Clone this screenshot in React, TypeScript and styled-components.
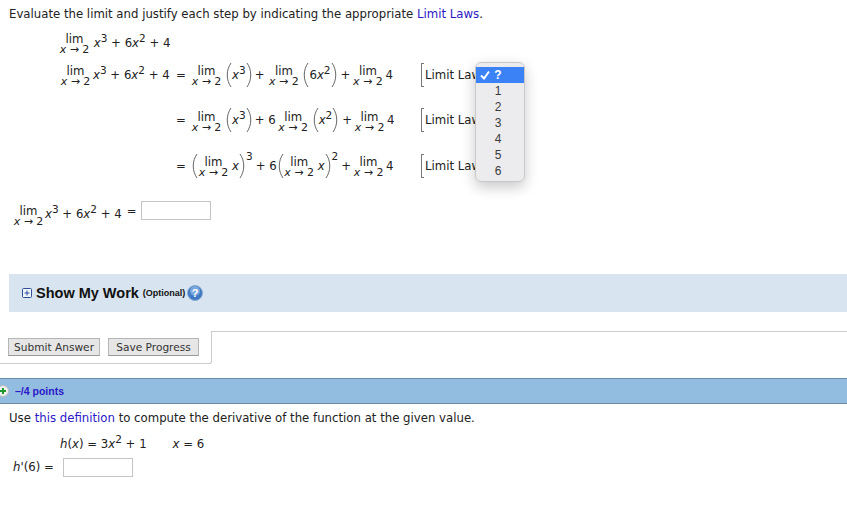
import React from "react";
import styled, { createGlobalStyle } from "styled-components";

const GlobalStyle = createGlobalStyle`
  html, body {
    margin: 0;
    background: #fff;
  }
  body {
    font-family: "DejaVu Sans", Verdana, sans-serif;
    font-size: 11.73px;
    color: #222;
    overflow: hidden;
  }
`;

const Page = styled.div`
  width: 847px;
  height: 511px;
  overflow: hidden;
`;

const Paragraph = styled.p`
  margin: 0;
  padding: 7px 0 0 9px;
  height: 14px;
  line-height: 14px;
`;

const TextLink = styled.a`
  color: #2a18c8;
`;

const MathLine = styled.div`
  white-space: pre;
  margin: 9px 0 0 59px;
  height: 18px;
  line-height: 18px;
`;

const LimBox = styled.span`
  display: inline-flex;
  flex-direction: column;
  align-items: center;
  flex: none;
  width: 31px;
  line-height: 10px;
  vertical-align: 4px;
  margin-top: 4px;
`;

const LimSub = styled.span`
  font-size: 11px;
  line-height: 10px;
  margin-top: 1px;
  white-space: pre;
`;

const Var = styled.i`
  font-style: italic;
`;

const Sup = styled.sup`
  font-size: 10.5px;
  line-height: 0;
  vertical-align: 5px;
`;

const ParenSup = styled.span`
  align-self: flex-start;
  font-size: 10.5px;
  line-height: 10px;
  margin-top: -2px;
`;

const Term = styled.span`
  white-space: pre;
`;

const Derivation = styled.div`
  position: relative;
  display: grid;
  grid-template-columns: 116px 15px 230px 1fr;
  grid-auto-rows: 45.5px;
  align-items: center;
  margin: 4px 0 0 60px;
  height: 137px;
`;

const Cell = styled.div`
  display: flex;
  align-items: center;
  white-space: pre;
`;

const Gap = styled.span<{ $w: number }>`
  display: inline-block;
  flex: none;
  width: ${(p) => p.$w}px;
`;

const ParenMark = styled.svg`
  flex: none;
  width: 7px;
  height: 26px;
  fill: none;
  stroke: #666;
  stroke-width: 1;
`;

const LawCell = styled.div`
  display: flex;
  align-items: center;
  gap: 1px;
  white-space: pre;
`;

const Bracket = styled.span`
  width: 3px;
  height: 24px;
  border: 1px solid #777;
  border-right: none;
  box-sizing: border-box;
`;

const Menu = styled.ul`
  position: absolute;
  left: 415px;
  top: 10px;
  width: 50px;
  height: 120px;
  box-sizing: border-box;
  margin: 0;
  padding: 4px 0;
  list-style: none;
  background: #ececee;
  border: 1px solid #c8c8c8;
  border-radius: 6px;
  box-shadow: 0 5px 14px rgba(0, 0, 0, 0.22);
  font-family: "Liberation Sans", Arial, sans-serif;
  font-size: 12px;
  color: #3a3a3a;
`;

const MenuItem = styled.li<{ $selected?: boolean }>`
  position: relative;
  height: 16px;
  line-height: 16px;
  text-align: center;
  padding-right: 4px;
  background: ${(p) => (p.$selected ? "#3b82f6" : "transparent")};
  color: ${(p) => (p.$selected ? "#fff" : "#3a3a3a")};
  font-weight: ${(p) => (p.$selected ? 700 : 400)};
`;

const Check = styled.svg`
  position: absolute;
  left: 4px;
  top: 3px;
  width: 10px;
  height: 10px;
  fill: none;
  stroke: #fff;
  stroke-width: 2;
`;

const AnswerLine = styled.div`
  display: flex;
  align-items: flex-start;
  white-space: pre;
  margin: 12px 0 0 13px;
  height: 20px;
  line-height: 20px;
`;

const AnswerLim = styled.span`
  display: flex;
  margin-top: 1px;
`;

const AnswerTerm = styled(Term)`
  margin-top: 3px;
`;

const AnswerEquals = styled.span`
  margin: 0 4px 0 5px;
`;

const AnswerInput = styled.input<{ $gap?: number }>`
  width: 70px;
  height: 19px;
  box-sizing: border-box;
  margin: 0 0 0 ${(p) => p.$gap ?? 0}px;
  border: 1px solid #c4c4c4;
  background: #fff;
`;

const WorkBand = styled.div`
  display: flex;
  align-items: center;
  height: 38px;
  margin: 53px 0 0 9px;
  padding: 0 0 1px 13px;
  box-sizing: border-box;
  background: #d8e5f0;
  font-family: "Liberation Sans", Arial, sans-serif;
  color: #111;
`;

const ExpandBox = styled.svg`
  width: 10px;
  height: 10px;
  margin: 0 4px 0 0;
  fill: #eef4fa;
  stroke: #2f4f9a;
`;

const WorkTitle = styled.strong`
  font-size: 14.5px;
`;

const WorkOptional = styled.strong`
  margin-left: 4px;
  font-size: 9px;
`;

const HelpIcon = styled.svg`
  width: 16px;
  height: 16px;
  margin-left: 2px;
`;

const ActionRow = styled.div`
  display: flex;
  height: 50px;
  margin-top: 19px;
`;

const ButtonTab = styled.div`
  display: flex;
  align-items: flex-start;
  gap: 8px;
  width: 212px;
  height: 33px;
  padding: 7px 0 0 8px;
  box-sizing: border-box;
  border-right: 1px solid #ccc;
  border-bottom: 1px solid #ccc;
  border-bottom-right-radius: 3px;
`;

const TabRest = styled.div`
  flex: 1;
  height: 0;
  border-top: 1px solid #ccc;
`;

const ActionButton = styled.button<{ $width: number }>`
  width: ${(p) => p.$width}px;
  height: 18px;
  padding: 0;
  margin: 0;
  border: 1px solid #b5b5b5;
  border-bottom-color: #999;
  background: #e6e6e6;
  border-radius: 0;
  font-family: "DejaVu Sans", Verdana, sans-serif;
  font-size: 10.6px;
  color: #333;
`;

const PointsBand = styled.div`
  position: relative;
  display: flex;
  align-items: center;
  height: 26px;
  margin-top: -3px;
  padding-left: 15px;
  box-sizing: border-box;
  background: #93bde0;
  border-top: 1px solid #6d8ba6;
  border-bottom: 1px solid #6d8ba6;
  font-family: "Liberation Sans", Arial, sans-serif;
  font-size: 10.5px;
  font-weight: 700;
  color: #2a18c8;
`;

const PlusBadge = styled.svg`
  position: absolute;
  left: -3px;
  top: 6px;
  width: 12px;
  height: 12px;
`;

const ExpressionLine = styled.div`
  white-space: pre;
  margin: 12px 0 0 60px;
  height: 14px;
  line-height: 14px;
`;

const DerivativeLine = styled.div`
  display: flex;
  align-items: center;
  white-space: pre;
  margin: 7px 0 0 13px;
  height: 18px;
`;

const Paren = ({ right }: { right?: boolean }) => (
  <ParenMark viewBox="0 0 7 26">
    <path d={right ? "M1 1 C6 8 6 18 1 25" : "M6 1 C1 8 1 18 6 25"} />
  </ParenMark>
);

const Lim = () => (
  <LimBox>
    lim
    <LimSub>
      <Var>x</Var> → 2
    </LimSub>
  </LimBox>
);

const Polynomial = () => (
  <Term>
    <Var>x</Var>
    <Sup>3</Sup> + 6<Var>x</Var>
    <Sup>2</Sup> + 4
  </Term>
);

const Power = ({ children, exp }: { children: React.ReactNode; exp: number }) => (
  <Term>
    {children}
    <Sup>{exp}</Sup>
  </Term>
);

const LawText = () => (
  <LawCell>
    <Bracket />
    Limit Law
  </LawCell>
);

const Rows = () => (
  <Derivation>
    <Cell>
      <Lim />
      <Gap $w={2} />
      <Polynomial />
    </Cell>
    <Cell>=</Cell>
    <Cell>
      <Lim />
      <Gap $w={3} />
      <Paren />
      <Power exp={3}>
        <Var>x</Var>
      </Power>
      <Paren right />
      <Gap $w={2} />+<Gap $w={4} />
      <Lim />
      <Gap $w={3} />
      <Paren />
      <Power exp={2}>
        6<Var>x</Var>
      </Power>
      <Paren right />
      <Gap $w={3} />+<Gap $w={2} />
      <Lim />
      <Gap $w={2} />4
    </Cell>
    <LawText />

    <span />
    <Cell>=</Cell>
    <Cell>
      <Lim />
      <Gap $w={3} />
      <Paren />
      <Power exp={3}>
        <Var>x</Var>
      </Power>
      <Paren right />
      <Gap $w={2} />+ 6<Gap $w={2} />
      <Lim />
      <Gap $w={3} />
      <Paren />
      <Power exp={2}>
        <Var>x</Var>
      </Power>
      <Paren right />
      <Gap $w={3} />+<Gap $w={2} />
      <Lim />
      <Gap $w={2} />4
    </Cell>
    <LawText />

    <span />
    <Cell>=</Cell>
    <Cell>
      <Paren />
      <Lim />
      <Gap $w={3} />
      <Var>x</Var>
      <Paren right />
      <ParenSup>3</ParenSup>
      <Gap $w={3} />+ 6
      <Paren />
      <Lim />
      <Gap $w={3} />
      <Var>x</Var>
      <Paren right />
      <ParenSup>2</ParenSup>
      <Gap $w={3} />+<Gap $w={2} />
      <Lim />
      <Gap $w={2} />4
    </Cell>
    <LawText />

    <Menu>
      <MenuItem $selected>
        <Check viewBox="0 0 10 10">
          <path d="M1 5.5 L4 8.5 L9 1.5" />
        </Check>
        ?
      </MenuItem>
      {[1, 2, 3, 4, 5, 6].map((n) => (
        <MenuItem key={n}>{n}</MenuItem>
      ))}
    </Menu>
  </Derivation>
);

const App: React.FC = () => {
  return (
    <Page>
      <GlobalStyle />
      <Paragraph>
        Evaluate the limit and justify each step by indicating the appropriate{" "}
        <TextLink>Limit Laws</TextLink>.
      </Paragraph>
      <MathLine>
        <Lim /> <Polynomial />
      </MathLine>
      <Rows />
      <AnswerLine>
        <AnswerLim>
          <Lim />
        </AnswerLim>
        <Gap $w={1} />
        <AnswerTerm>
          <Polynomial />
        </AnswerTerm>
        <AnswerEquals>=</AnswerEquals>
        <AnswerInput />
      </AnswerLine>
      <WorkBand>
        <ExpandBox viewBox="0 0 10 10">
          <rect x="0.5" y="0.5" width="9" height="9" rx="1" />
          <path d="M2.5 5 H7.5 M5 2.5 V7.5" />
        </ExpandBox>
        <WorkTitle>Show My Work</WorkTitle>
        <WorkOptional>(Optional)</WorkOptional>
        <HelpIcon viewBox="0 0 16 16">
          <circle cx="8" cy="8" r="7.5" fill="#3f78c4" stroke="#8aa9cf" />
          <circle cx="8" cy="6" r="5" fill="#7aa7dd" />
          <text x="8" y="12" fontSize="11" fontWeight="700" textAnchor="middle" fill="#fff">
            ?
          </text>
        </HelpIcon>
      </WorkBand>
      <ActionRow>
        <ButtonTab>
          <ActionButton $width={92}>Submit Answer</ActionButton>
          <ActionButton $width={91}>Save Progress</ActionButton>
        </ButtonTab>
        <TabRest />
      </ActionRow>
      <PointsBand>
        <PlusBadge viewBox="0 0 12 12">
          <circle cx="6" cy="6" r="5.5" fill="#f0f0f0" stroke="#bbb" />
          <path d="M3 6 H9 M6 3 V9" stroke="#1f9a2e" strokeWidth="2" />
        </PlusBadge>
        –/4 points
      </PointsBand>
      <Paragraph>
        Use <TextLink>this definition</TextLink> to compute the derivative of the function at the given value.
      </Paragraph>
      <ExpressionLine>
        <Var>h</Var>(<Var>x</Var>) = 3<Var>x</Var>
        <Sup>2</Sup> + 1<Gap $w={26} />
        <Var>x</Var> = 6
      </ExpressionLine>
      <DerivativeLine>
        <Var>h</Var>'(6) =
        <AnswerInput $gap={9} />
      </DerivativeLine>
    </Page>
  );
};

export default App;
